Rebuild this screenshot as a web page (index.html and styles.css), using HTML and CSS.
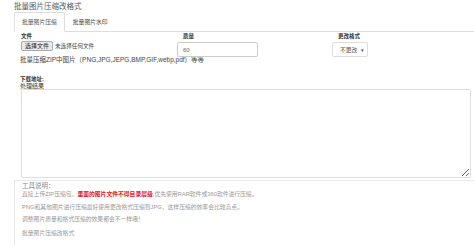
FILE: index.html
```html
<!DOCTYPE html>
<html lang="zh-CN">
<head>
  <meta charset="UTF-8">
  <meta name="viewport" content="width=device-width, initial-scale=1.0">
  <title>批量图片压缩改格式</title>
  <link rel="stylesheet" href="styles.css">
</head>
<body>
  <div class="wrap">
    <h3 class="title">批量图片压缩改格式</h3>

    <ul class="nav">
      <li class="tab active">批量图片压缩</li>
      <li class="tab">批量图片水印</li>
    </ul>

    <div class="pane">
      <div class="row">
        <div class="col col-file">
          <div class="label">文件</div>
          <div class="file-box">
            <span class="file-btn">选择文件</span>
            <span class="file-name">未选择任何文件</span>
          </div>
          <p class="hint">批量压缩ZIP中图片（PNG,JPG,JEPG,BMP,GIF,webp,pdf）等等</p>
        </div>
        <div class="col col-quality">
          <div class="label">质量</div>
          <input class="text-input" type="text" value="60">
        </div>
        <div class="col col-format">
          <div class="label">更改格式</div>
          <div class="select"><span>不更改</span><span class="caret">▾</span></div>
        </div>
      </div>

      <div class="label download">下载地址:</div>
      <div class="result-title">处理结果</div>
      <textarea class="result"></textarea>
    </div>

    <div class="notes">
      <div class="notes-title">工具说明：</div>
      <p>直接上传ZIP压缩包，<span class="warn">里面的图片文件不得目录层级</span>,优先使用RAR软件或360软件进行压缩。</p>
      <p class="gap1">PNG和其他图片进行压缩最好使用更改格式压缩到JPG，这样压缩的效率会比较高点。</p>
      <p class="gap2">调整图片质量和格式压缩的效果都会不一样哦！</p>
      <p class="gap3">批量图片压缩改格式</p>
    </div>
  </div>
</body>
</html>
```

FILE: styles.css
```css
* {
  box-sizing: border-box;
}

body {
  margin: 0;
  overflow: hidden;
  background: #fff;
  font-family: 'Liberation Sans', 'Noto Sans CJK SC', sans-serif;
  color: #333;
}

.wrap {
  width: 500px;
  padding-left: 14px;
}

.title {
  margin: 0;
  padding-top: 1px;
  height: 12px;
  font-size: 7.5px;
  line-height: 11px;
  font-weight: normal;
  color: #555;
}

.nav {
  display: flex;
  margin: 0;
  padding: 0;
  list-style: none;
  border-bottom: 1px solid #ddd;
}

.tab {
  height: 20px;
  margin-bottom: -1px;
  padding: 0 7px;
  border: 1px solid transparent;
  border-radius: 2px 2px 0 0;
  font-size: 5.8px;
  line-height: 18px;
  color: #444;
}

.tab.active {
  border-color: #ddd #ddd #fff;
  background: #fff;
  color: #555;
}

.pane {
  padding-left: 6px;
}

.row {
  display: flex;
  margin-top: 1px;
}

.col-file {
  width: 157px;
}

.col-quality {
  width: 155px;
}

.label {
  font-size: 5.5px;
  line-height: 6px;
  font-weight: bold;
  color: #333;
}

.col-file .label {
  padding-left: 1px;
}

.col-quality .label,
.col-format .label {
  padding-left: 6px;
}

.file-box {
  display: flex;
  align-items: center;
  margin-top: 2px;
  height: 10px;
}

.file-btn {
  height: 10px;
  margin-left: 1px;
  padding: 0 3px;
  border: 1px solid #aaa;
  border-radius: 2px;
  background: #e9e9e9;
  font-size: 6px;
  line-height: 8px;
  color: #222;
}

.file-name {
  margin-left: 2px;
  font-size: 5.6px;
  color: #444;
}

.hint {
  margin: 4px 0 0;
  white-space: nowrap;
  font-size: 6.5px;
  line-height: 10px;
  color: #444;
}

.text-input {
  display: block;
  width: 81px;
  height: 15px;
  margin-top: 3px;
  padding: 0 5px;
  border: 1px solid #ccc;
  border-radius: 2px;
  font-family: inherit;
  font-size: 6px;
  color: #666;
  outline: none;
}

.select {
  display: flex;
  justify-content: space-between;
  align-items: center;
  width: 36px;
  height: 15px;
  margin-top: 3px;
  padding: 0 3px 0 7px;
  border: 1px solid #ddd;
  border-radius: 2px;
  font-size: 5.8px;
  color: #555;
}

.caret {
  font-size: 5px;
  color: #444;
}

.download {
  margin-top: 11px;
  line-height: 7px;
}

.result-title {
  font-size: 6px;
  line-height: 6px;
  color: #333;
}

.result {
  display: block;
  width: 450px;
  height: 89px;
  margin: 0 0 0 1px;
  border: 1px solid #ddd;
  border-radius: 1px;
  resize: vertical;
  outline: none;
}

.notes {
  margin-top: 2px;
  padding: 1px 0 20px 7px;
  border: 1px solid #e8e8e8;
  color: #999;
}

.notes-title {
  font-size: 6.5px;
  line-height: 8px;
  color: #888;
}

.notes p {
  margin: 0;
  font-size: 5.8px;
  line-height: 8px;
}

.notes .gap1 {
  margin-top: 5px;
}

.notes .gap2 {
  margin-top: 4px;
}

.notes .gap3 {
  margin-top: 6px;
}

.warn {
  color: #e02020;
  font-weight: bold;
}
```
